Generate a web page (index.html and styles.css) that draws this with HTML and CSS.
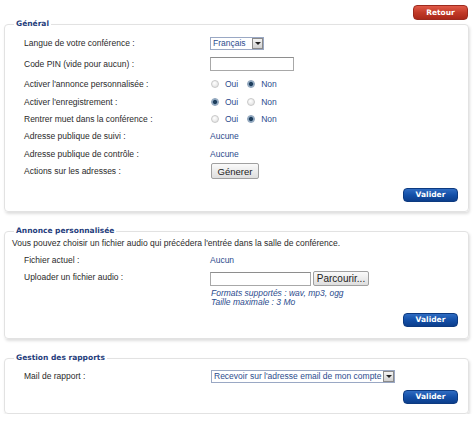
FILE: index.html
```html
<!DOCTYPE html>
<html lang="fr">
<head>
<meta charset="utf-8">
<title>Paramètres de conférence</title>
<link rel="stylesheet" href="styles.css">
</head>
<body>
<div class="page">
  <div class="topbar">
    <button class="btn btn-red" type="button">Retour</button>
  </div>

  <fieldset class="box box-general">
    <legend>Général</legend>
    <div class="rows">
      <div class="row h20"><span class="label">Langue de votre conférence :</span>
        <span class="ctrl"><span class="select sel-lang"><span class="sel-text">Français</span><span class="sel-arrow"></span></span></span></div>
      <div class="row h21"><span class="label">Code PIN (vide pour aucun) :</span>
        <span class="ctrl"><input class="text pin" type="text"></span></div>
      <div class="row h19"><span class="label">Activer l'annonce personnalisée :</span>
        <span class="ctrl"><label class="opt"><input type="radio" name="a1">Oui</label><label class="opt"><input type="radio" name="a1" checked>Non</label></span></div>
      <div class="row h17"><span class="label">Activer l'enregistrement :</span>
        <span class="ctrl"><label class="opt"><input type="radio" name="a2" checked>Oui</label><label class="opt"><input type="radio" name="a2">Non</label></span></div>
      <div class="row h17"><span class="label">Rentrer muet dans la conférence :</span>
        <span class="ctrl"><label class="opt"><input type="radio" name="a3">Oui</label><label class="opt"><input type="radio" name="a3" checked>Non</label></span></div>
      <div class="row h18"><span class="label">Adresse publique de suivi :</span>
        <span class="ctrl value">Aucune</span></div>
      <div class="row h17"><span class="label">Adresse publique de contrôle :</span>
        <span class="ctrl value">Aucune</span></div>
      <div class="row h18"><span class="label">Actions sur les adresses :</span>
        <span class="ctrl"><button class="native gen" type="button">Génerer</button></span></div>
    </div>
    <div class="actions a1"><button class="btn btn-blue" type="button">Valider</button></div>
  </fieldset>

  <fieldset class="box box-annonce">
    <legend>Annonce personnalisée</legend>
    <p class="intro">Vous pouvez choisir un fichier audio qui précédera l'entrée dans la salle de conférence.</p>
    <div class="rows">
      <div class="row h19"><span class="label">Fichier actuel :</span>
        <span class="ctrl value">Aucun</span></div>
      <div class="row top"><span class="label upl">Uploader un fichier audio :</span>
        <span class="ctrl col">
          <span class="file"><input class="text filebox" type="text"><button class="native browse" type="button">Parcourir...</button></span>
          <span class="hint first">Formats supportés : wav, mp3, ogg</span>
          <span class="hint">Taille maximale : 3 Mo</span>
        </span></div>
    </div>
    <div class="actions a2"><button class="btn btn-blue" type="button">Valider</button></div>
  </fieldset>

  <fieldset class="box box-rapport">
    <legend>Gestion des rapports</legend>
    <div class="rows">
      <div class="row h20"><span class="label">Mail de rapport :</span>
        <span class="ctrl"><span class="select sel-mail"><span class="sel-text">Recevoir sur l'adresse email de mon compte</span><span class="sel-arrow"></span></span></span></div>
    </div>
    <div class="actions a3"><button class="btn btn-blue" type="button">Valider</button></div>
  </fieldset>
</div>
</body>
</html>
```

FILE: styles.css
```css
* { box-sizing: border-box; }
html, body { margin: 0; padding: 0; background: #ffffff; }
body {
  font-family: "Liberation Sans", Arial, sans-serif;
  font-size: 8.5px;
  color: #2a2a2a;
}
.page { width: 474px; padding: 0 5px 0 4px; }

.topbar {
  height: 19px;
  display: flex;
  justify-content: flex-end;
  align-items: flex-start;
  padding-top: 5px;
  padding-right: 1px;
}

.btn {
  font-family: "DejaVu Sans", Verdana, sans-serif;
  font-weight: bold;
  font-size: 7.5px;
  color: #ffffff;
  border-radius: 4px;
  width: 55px;
  height: 15px;
  padding: 0;
  line-height: 13px;
  cursor: pointer;
  flex-shrink: 0;
}
.btn-red {
  background: linear-gradient(#e05a48, #c23a28 50%, #a9281a);
  border: 1px solid #9c2a1e;
}
.btn-blue {
  background: linear-gradient(#2f6cc2, #1450a8 50%, #0c3e8c);
  border: 1px solid #0d3a80;
  height: 14px;
  line-height: 12px;
}

.box {
  margin: 0;
  padding: 0;
  border: 1px solid #e2e2e2;
  border-radius: 4px;
  box-shadow: 1px 2px 3px rgba(0,0,0,0.13);
  min-width: 0;
}
.box legend {
  margin-left: 9px;
  padding: 0 2px;
  font-family: "DejaVu Sans", Verdana, sans-serif;
  font-weight: bold;
  font-size: 7.5px;
  line-height: 10px;
  color: #1f3d7c;
}
.box-annonce { margin-top: 14px; }
.box-rapport { margin-top: 14px; }

.rows { display: flex; flex-direction: column; }
.box-general .rows { padding-top: 4px; }
.box-rapport .rows { padding-top: 3px; }
.row {
  display: grid;
  grid-template-columns: 186px 1fr;
  align-items: center;
  padding-left: 19px;
}
.row.top { align-items: start; }
.h17 { height: 17px; }
.h18 { height: 18px; }
.h19 { height: 19px; }
.h20 { height: 20px; }
.h21 { height: 21px; }

.label { white-space: nowrap; }
.label.upl { padding-top: 3px; }
.ctrl { display: flex; align-items: center; }
.ctrl.col { flex-direction: column; align-items: flex-start; }
.value { color: #2c4c8e; }

.select {
  display: inline-flex;
  align-items: center;
  height: 13px;
  border: 1px solid #9aa8c4;
  background: #ffffff;
  color: #2c4c8e;
  padding-left: 2px;
}
.sel-lang { width: 54px; }
.sel-mail { width: 184px; margin-left: 1px; }
.sel-text { flex: 1; white-space: nowrap; overflow: hidden; }
.sel-arrow {
  width: 11px;
  height: 11px;
  border: 1px solid #8a8a8a;
  background: linear-gradient(#f4f4f4, #d0d0d0);
  position: relative;
}
.sel-arrow::after {
  content: "";
  position: absolute;
  left: 2px;
  top: 3px;
  border-left: 3px solid transparent;
  border-right: 3px solid transparent;
  border-top: 3px solid #222222;
}

.text {
  height: 14px;
  border: 1px solid #a8a8a8;
  border-top-color: #8e8e8e;
  background: #ffffff;
  padding: 0;
  margin: 0;
  font-size: 8px;
}
.pin { width: 84px; }

.opt {
  display: inline-flex;
  align-items: center;
  color: #2c4c8e;
  margin-right: 8px;
}
.opt input {
  appearance: none;
  -webkit-appearance: none;
  width: 8px;
  height: 8px;
  margin: 0 6px 0 1px;
  border-radius: 50%;
  border: 1px solid #c8c8c8;
  background: radial-gradient(circle at 40% 35%, #ffffff, #dcdcdc);
}
.opt input:checked {
  border-color: #8aa0b8;
  background: radial-gradient(circle, #1e3e5c 0 1.6px, #7c98b4 2.4px, #dde6ee 3.6px);
}

.native {
  font-family: "Liberation Sans", Arial, sans-serif;
  color: #222222;
  border: 1px solid #a0a0a0;
  border-radius: 2px;
  background: linear-gradient(#fafafa, #dedede);
  padding: 0;
  margin: 0;
}
.gen { width: 48px; height: 16px; font-size: 9.5px; margin-left: 1px; }

.actions {
  display: flex;
  justify-content: flex-end;
  padding-right: 10px;
}
.a1 { padding-top: 8px; padding-bottom: 9px; }
.a2 { padding-top: 6px; padding-bottom: 11px; }
.a3 { padding-top: 4px; padding-bottom: 9px; }

.intro { margin: 0; padding: 1px 0 1px 7px; line-height: 12px; }

.file { display: flex; align-items: center; margin-top: 2px; }
.filebox { width: 101px; }
.browse { width: 56px; height: 15px; font-size: 10px; margin-left: 2px; }
.hint {
  font-style: italic;
  color: #2c4c8e;
  font-size: 8.5px;
  line-height: 9px;
  padding-left: 1px;
}
.hint.first { margin-top: 3px; }
```
